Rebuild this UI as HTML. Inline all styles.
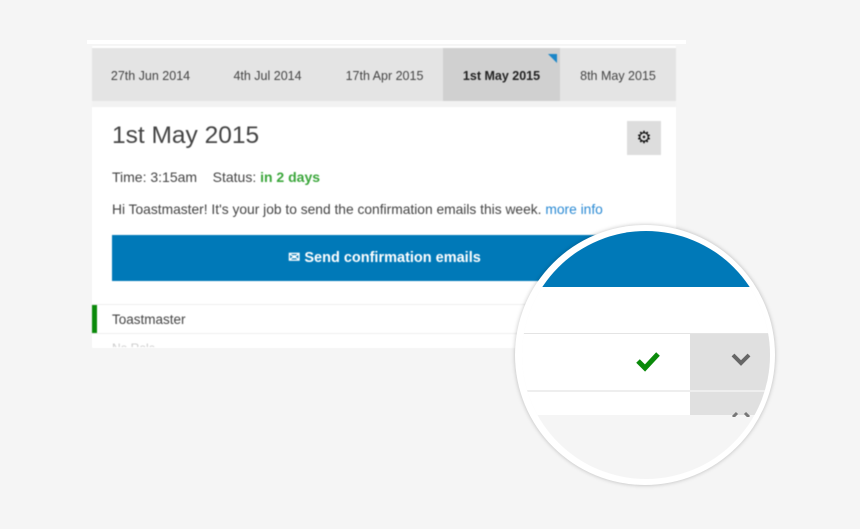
<!DOCTYPE html>
<html><head><style>
body{margin:0;width:860px;height:529px;background:#f5f5f5;position:relative;overflow:hidden;font-family:"Liberation Sans",sans-serif;}
.abs{position:absolute}
.card{filter:blur(0.5px)}
.tab{position:absolute;top:48px;height:52px;line-height:56px;font-size:12.5px;color:#444;text-align:center}
</style></head><body>
<div class="abs" style="left:87px;top:40px;width:599px;height:4px;background:#fff"></div>
<div class="card">
<div class="abs" style="left:92px;top:46px;width:584px;height:302px;background:#fff"></div>
<div class="abs" style="left:92px;top:48px;width:584px;height:53px;background:#e4e4e4"></div>
<div class="abs" style="left:443px;top:48px;width:117px;height:53px;background:#d0d0d0"></div>
<div class="abs" style="left:548px;top:54px;width:0;height:0;border-top:9px solid #1b86c8;border-left:9px solid transparent"></div>
<div class="tab" style="left:92px;width:117px">27th Jun 2014</div>
<div class="tab" style="left:209px;width:117px">4th Jul 2014</div>
<div class="tab" style="left:326px;width:117px">17th Apr 2015</div>
<div class="tab" style="left:443px;width:117px;color:#222;font-weight:bold">1st May 2015</div>
<div class="tab" style="left:560px;width:116px">8th May 2015</div>
<div class="abs" style="left:92px;top:101px;width:584px;height:6px;background:#f2f2f2"></div>
<div class="abs" style="left:112px;top:122px;font-size:24.5px;color:#444">1st May 2015</div>
<div class="abs" style="left:627px;top:121px;width:34px;height:34px;background:#ddd;text-align:center;line-height:34px;font-size:17px;color:#111">⚙</div>
<div class="abs" style="left:112px;top:169px;font-size:14px;color:#444">Time: 3:15am &nbsp;&nbsp;&nbsp;Status: <span style="color:#3aa63a;font-weight:bold">in 2 days</span></div>
<div class="abs" style="left:112px;top:202px;font-size:13.8px;color:#444">Hi Toastmaster! It's your job to send the confirmation emails this week. <span style="color:#2a8ad4">more info</span></div>
<div class="abs" style="left:112px;top:235px;width:545px;height:46px;background:#0079b8;color:#fff;font-weight:bold;font-size:14.5px;line-height:46px;text-align:center">✉ Send confirmation emails</div>
<div class="abs" style="left:92px;top:304px;width:584px;height:1px;background:#eee"></div>
<div class="abs" style="left:92px;top:305px;width:5px;height:28px;background:#0a8a0a"></div>
<div class="abs" style="left:112px;top:312px;font-size:13.5px;color:#444">Toastmaster</div>
<div class="abs" style="left:92px;top:333px;width:584px;height:1px;background:#eee"></div>
<div class="abs" style="left:112px;top:341px;font-size:12px;color:#ccc;height:6px;overflow:hidden">No Role</div>
</div>
<div class="abs" style="left:515px;top:225px;width:260px;height:260px;border-radius:50%;background:#fff;box-shadow:0 0 4px rgba(0,0,0,.25)"></div>
<div class="abs" style="left:522px;top:231px;width:248px;height:248px;border-radius:50%;overflow:hidden;background:#f5f5f5">
<div class="abs" style="left:0;top:0;width:248px;height:56px;background:#0079b8"></div>
<div class="abs" style="left:0;top:56px;width:248px;height:46px;background:#fff"></div>
<div class="abs" style="left:0;top:102px;width:248px;height:1px;background:#e4e4e4"></div>
<div class="abs" style="left:0;top:103px;width:168px;height:56px;background:#fff"></div>
<div class="abs" style="left:168px;top:103px;width:80px;height:56px;background:#e0e0e0"></div>
<div class="abs" style="left:0;top:159px;width:248px;height:2px;background:#eee"></div>
<div class="abs" style="left:0;top:161px;width:168px;height:23px;background:#fff"></div>
<div class="abs" style="left:168px;top:161px;width:80px;height:23px;background:#e0e0e0"></div>
<svg class="abs" style="left:112px;top:118px" width="30" height="24"><path d="M4 12 L11 19 L24 5" stroke="#0a8a0a" stroke-width="5" fill="none"/></svg>
<svg class="abs" style="left:208px;top:121px" width="24" height="16"><path d="M3 3 L11 11 L19 3" stroke="#666" stroke-width="4" fill="none"/></svg>
<svg class="abs" style="left:208px;top:178px" width="24" height="8"><path d="M3 8 L7 4 M15 4 L19 8" stroke="#777" stroke-width="3" fill="none"/></svg>
</div>
</body></html>
